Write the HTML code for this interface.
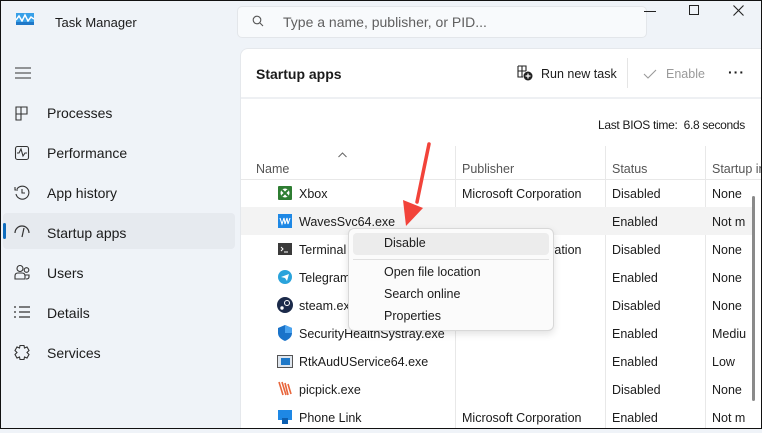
<!DOCTYPE html>
<html><head><meta charset="utf-8"><style>
*{margin:0;padding:0;box-sizing:border-box}
body{width:762px;height:429px;overflow:hidden;background:#eff3f8;font-family:"Liberation Sans",sans-serif;font-size:12.5px;color:#1b1b1b;position:relative}
.abs{position:absolute}
.frame{position:absolute;left:0;top:0;width:762px;height:429px;border:1px solid #111;pointer-events:none;z-index:50}
.nav{position:absolute;left:47px;font-size:14px;color:#1b1b1b}
.ico{position:absolute;left:14px}
.panel{position:absolute;left:240px;top:48px;width:522px;height:381px;background:#fff;border-top-left-radius:8px;border:1px solid #e5e8ec;border-right:none;border-bottom:none}
.row{position:absolute;left:241px;width:512px;height:28px}
.cell{position:absolute;font-size:12.5px;line-height:30px;white-space:nowrap}
.vl{position:absolute;top:146px;width:1px;height:283px;background:#e8e8e8}
</style></head><body>
<svg class="abs" style="left:16px;top:13px" width="18" height="12" viewBox="0 0 18 12"><rect width="18" height="12" fill="#38a0e8"/><path d="M0 7 L3 3 L6 8 L9 2 L12 8 L15 4 L18 6" stroke="#fff" stroke-width="1.5" fill="none"/><rect y="9" width="18" height="3" fill="#1f78c8"/></svg>
<div class="abs" style="left:55px;top:15px;font-size:13px">Task Manager</div>
<div class="abs" style="left:237px;top:6px;width:410px;height:32px;background:#f8fafc;border:1px solid #e3e6ea;border-radius:5px"></div>
<svg class="abs" style="left:252px;top:15px" width="12" height="12" viewBox="0 0 12 12"><circle cx="5" cy="5" r="3.8" stroke="#555" stroke-width="1.1" fill="none"/><path d="M8 8 L11 11" stroke="#555" stroke-width="1.1"/></svg>
<div class="abs" style="left:283px;top:14px;font-size:14px;color:#606060">Type a name, publisher, or PID...</div>
<div class="abs" style="left:644px;top:11px;width:12px;height:1px;background:#222"></div>
<div class="abs" style="left:689px;top:5px;width:10px;height:10px;border:1px solid #222"></div>
<svg class="abs" style="left:733px;top:5px" width="11" height="11"><path d="M0.5 0.5L10.5 10.5M10.5 0.5L0.5 10.5" stroke="#222" stroke-width="1.1"/></svg>
<svg class="abs" style="left:15px;top:67px" width="16" height="12"><path d="M0 1H16M0 6H16M0 11H16" stroke="#333" stroke-width="1.1"/></svg>
<div class="abs" style="left:3px;top:213px;width:232px;height:36px;background:#e6eaef;border-radius:4px"></div>
<div class="abs" style="left:3px;top:223px;width:3px;height:16px;background:#0f6cbd;border-radius:2px"></div>
<svg class="ico" style="top:106px" width="16" height="16"><path d="M2 1H7V8H2ZM7 1H13V8H7M2 8V14H7V8M7 14" stroke="#333" fill="none" stroke-width="1.1"/></svg>
<div class="nav" style="top:105px">Processes</div>
<svg class="ico" style="top:145px" width="16" height="16"><rect x="1.5" y="1.5" width="13" height="13" rx="2" stroke="#333" fill="none" stroke-width="1.1"/><path d="M3 8H5L7 4L9 11L11 8H13" stroke="#333" fill="none" stroke-width="1.1"/></svg>
<div class="nav" style="top:145px">Performance</div>
<svg class="ico" style="top:185px" width="17" height="16"><path d="M3 4A6.5 6.5 0 1 1 2 9" stroke="#333" fill="none" stroke-width="1.1"/><path d="M1 2V5H4M8 4V8H11" stroke="#333" fill="none" stroke-width="1.1"/></svg>
<div class="nav" style="top:185px">App history</div>
<svg class="ico" style="top:225px" width="17" height="14"><path d="M1 8A7 7 0 0 1 15 8M8 12L10 3" stroke="#333" fill="none" stroke-width="1.2"/></svg>
<div class="nav" style="top:225px">Startup apps</div>
<svg class="ico" style="top:264px" width="17" height="16"><circle cx="6" cy="4.5" r="3" stroke="#333" fill="none" stroke-width="1.1"/><circle cx="12.5" cy="6" r="2.3" stroke="#333" fill="none" stroke-width="1.1"/><path d="M1 15V12Q1 9 4 9H8Q11 9 11 12V15ZM11 11H15V13Q15 15 12 15" stroke="#333" fill="none" stroke-width="1.1"/></svg>
<div class="nav" style="top:265px">Users</div>
<svg class="ico" style="top:306px" width="17" height="12"><path d="M0 1H2M0 6H2M0 11H2M5 1H16M5 6H16M5 11H16" stroke="#333" stroke-width="1.2"/></svg>
<div class="nav" style="top:305px">Details</div>
<svg class="ico" style="top:344px" width="17" height="17"><path d="M6 1.5L10 1.5L10.5 4L13 3L15 6.5L13 8.5L15 10.5L13 14L10.5 13L10 15.5H6L5.5 13L3 14L1 10.5L3 8.5L1 6.5L3 3L5.5 4Z" stroke="#333" fill="none" stroke-width="1.1"/></svg>
<div class="nav" style="top:345px">Services</div>
<div class="panel"></div>
<div class="abs" style="left:256px;top:66px;font-size:14px;font-weight:bold;color:#1b1b1b">Startup apps</div>
<svg class="abs" style="left:517px;top:65px" width="17" height="17"><path d="M1 1H9V6M1 1V12H6M1 6H9M5 1V12" stroke="#222" fill="none" stroke-width="1.1"/><circle cx="11" cy="11" r="4.5" fill="#222"/><path d="M11 8.5V13.5M8.5 11H13.5" stroke="#fff" stroke-width="1.2"/></svg>
<div class="abs" style="left:541px;top:67px;font-size:12.5px">Run new task</div>
<div class="abs" style="left:627px;top:58px;width:1px;height:30px;background:#e5e5e5"></div>
<svg class="abs" style="left:643px;top:69px" width="14" height="10"><path d="M1 5L5 9L13 1" stroke="#9a9a9a" fill="none" stroke-width="1.1"/></svg>
<div class="abs" style="left:666px;top:67px;font-size:12.5px;color:#9a9a9a">Enable</div>
<div class="abs" style="left:728px;top:64px;font-size:14px;font-weight:bold;letter-spacing:1px">···</div>
<div class="abs" style="left:241px;top:97px;width:521px;height:2px;background:#eef0f3"></div>
<div class="abs" style="right:17px;top:118px;font-size:12px;letter-spacing:-0.3px;white-space:nowrap">Last BIOS time:&nbsp; 6.8 seconds</div>
<div class="vl" style="left:455px"></div><div class="vl" style="left:605px"></div><div class="vl" style="left:705px"></div>
<svg class="abs" style="left:338px;top:152px" width="9" height="6"><path d="M0.5 5L4.5 1L8.5 5" stroke="#666" fill="none"/></svg>
<div class="abs" style="left:256px;top:162px;color:#555">Name</div>
<div class="abs" style="left:462px;top:162px;color:#555">Publisher</div>
<div class="abs" style="left:612px;top:162px;color:#555">Status</div>
<div class="abs" style="left:712px;top:162px;color:#555;white-space:nowrap">Startup im</div>
<div class="abs" style="left:241px;top:179px;width:521px;height:1px;background:#e8e8e8"></div>
<div class="row" style="top:179px"><svg class="abs" style="left:37px;top:7px" width="14" height="14"><rect width="14" height="14" rx="1" fill="#2e7d32"/><circle cx="7" cy="7" r="4.5" fill="#fff"/><path d="M4 4L10 10M10 4L4 10" stroke="#2e7d32" stroke-width="2"/></svg><div class="cell" style="left:58px">Xbox</div><div class="cell" style="left:221px">Microsoft Corporation</div><div class="cell" style="left:371px">Disabled</div><div class="cell" style="left:471px">None</div></div>
<div class="row" style="top:207px;background:#f3f3f3"><svg class="abs" style="left:37px;top:7px" width="14" height="14"><rect width="14" height="14" fill="#1e88e5"/><path d="M2 4L4 10L6 4L7 10L9 4L10 10L12 4" stroke="#fff" fill="none" stroke-width="1.1"/></svg><div class="cell" style="left:58px">WavesSvc64.exe</div><div class="cell" style="left:371px">Enabled</div><div class="cell" style="left:471px">Not m</div></div>
<div class="row" style="top:235px"><svg class="abs" style="left:37px;top:8px" width="14" height="12"><rect width="14" height="12" fill="#3a3a3a"/><path d="M3 4L5 6L3 8M6 9H10" stroke="#fff" fill="none"/></svg><div class="cell" style="left:58px">Terminal</div><div class="cell" style="left:221px">Microsoft Corporation</div><div class="cell" style="left:371px">Disabled</div><div class="cell" style="left:471px">None</div></div>
<div class="row" style="top:263px"><svg class="abs" style="left:37px;top:7px" width="14" height="14"><circle cx="7" cy="7" r="7" fill="#2aa3db"/><path d="M3 7L11 4L9 11L7 8Z" fill="#fff"/></svg><div class="cell" style="left:58px">Telegram</div><div class="cell" style="left:371px">Enabled</div><div class="cell" style="left:471px">None</div></div>
<div class="row" style="top:291px"><svg class="abs" style="left:36px;top:6px" width="16" height="16"><circle cx="8" cy="8" r="8" fill="#1b2a4a"/><circle cx="10" cy="6" r="2.5" stroke="#fff" fill="none"/><circle cx="5" cy="11" r="1.7" fill="#fff"/></svg><div class="cell" style="left:58px">steam.exe</div><div class="cell" style="left:371px">Disabled</div><div class="cell" style="left:471px">None</div></div>
<div class="row" style="top:319px"><svg class="abs" style="left:37px;top:6px" width="14" height="16"><path d="M7 0L14 3V8Q14 13 7 16Q0 13 0 8V3Z" fill="#1a73c9"/><path d="M7 0L14 3V8H7Z" fill="#4aa3ef"/></svg><div class="cell" style="left:58px">SecurityHealthSystray.exe</div><div class="cell" style="left:371px">Enabled</div><div class="cell" style="left:471px">Mediu</div></div>
<div class="row" style="top:347px"><svg class="abs" style="left:36px;top:8px" width="16" height="13"><rect x="0.5" y="0.5" width="15" height="12" fill="#dfe6ee" stroke="#555"/><rect x="4" y="3" width="9" height="7" fill="#1e78c8"/></svg><div class="cell" style="left:58px">RtkAudUService64.exe</div><div class="cell" style="left:371px">Enabled</div><div class="cell" style="left:471px">Low</div></div>
<div class="row" style="top:375px"><svg class="abs" style="left:37px;top:6px" width="14" height="16"><path d="M1 1L5 14M4 1L8 14M7 2L10 14M10 3L13 13" stroke="#e8663c" stroke-width="1.6"/></svg><div class="cell" style="left:58px">picpick.exe</div><div class="cell" style="left:371px">Disabled</div><div class="cell" style="left:471px">None</div></div>
<div class="row" style="top:403px"><svg class="abs" style="left:36px;top:7px" width="16" height="16"><rect x="1" y="0" width="14" height="10" fill="#1e88e5"/><rect x="5" y="8" width="6" height="6" fill="#0d5fb0"/></svg><div class="cell" style="left:58px">Phone Link</div><div class="cell" style="left:221px">Microsoft Corporation</div><div class="cell" style="left:371px">Enabled</div><div class="cell" style="left:471px">Not m</div></div>
<div class="abs" style="left:752px;top:196px;width:3px;height:205px;background:#8a8a8a;border-radius:2px"></div>
<div class="abs" style="left:348px;top:228px;width:206px;height:103px;background:#fbfbfb;border:1px solid #d8d8d8;border-radius:6px;box-shadow:0 3px 8px rgba(0,0,0,.12);z-index:10">
<div class="abs" style="left:4px;top:4px;width:196px;height:22px;background:#ececec;border-radius:4px"></div>
<div class="abs" style="left:35px;top:7px">Disable</div>
<div class="abs" style="left:4px;top:30px;width:196px;height:1px;background:#e0e0e0"></div>
<div class="abs" style="left:35px;top:36px">Open file location</div>
<div class="abs" style="left:35px;top:58px">Search online</div>
<div class="abs" style="left:35px;top:80px">Properties</div>
</div>
<svg class="abs" style="left:395px;top:140px;z-index:20" width="45" height="92"><path d="M34 4L22 62" stroke="#f2433a" stroke-width="3.5" stroke-linecap="round"/><path d="M8 60L28 68L11 86Z" fill="#f2433a"/></svg>
<div class="frame"></div>
</body></html>
